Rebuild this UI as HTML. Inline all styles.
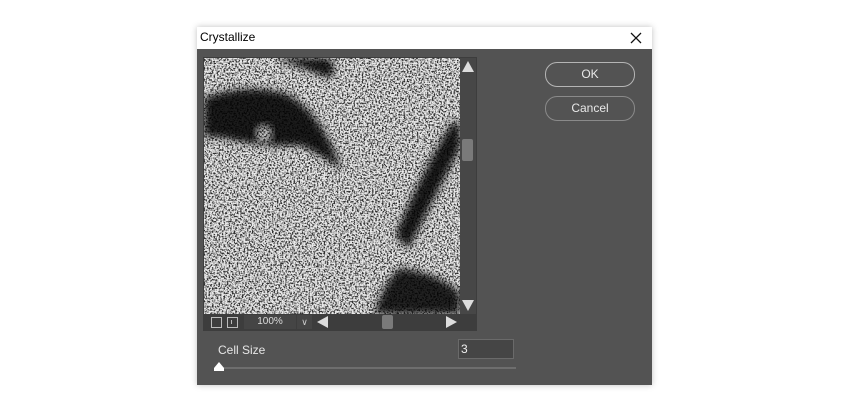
<!DOCTYPE html>
<html><head><style>
body{margin:0;width:850px;height:412px;background:#fff;position:relative;overflow:hidden;font-family:"Liberation Sans",sans-serif;}
.dlg{position:absolute;left:197px;top:27px;width:455px;height:358px;background:#535353;box-shadow:0 0 6px rgba(0,0,0,.25);}
.tb{position:absolute;left:0;top:0;width:455px;height:22px;background:#fff;}
.tb span{position:absolute;left:3px;top:3px;font-size:12px;color:#000;}
.btn{position:absolute;left:348px;width:88px;height:23px;border:1px solid #b5b5b5;border-radius:12px;color:#e8e8e8;font-size:12px;text-align:center;line-height:23px;}
.abs{position:absolute;}
</style></head><body>
<div class="dlg">
<div class="tb"><span>Crystallize</span>
<svg class="abs" style="left:433px;top:5px" width="12" height="12"><path d="M1 1L11 11M11 1L1 11" stroke="#111" stroke-width="1.3"/></svg></div>
<div class="abs" style="left:6px;top:30px;width:274px;height:274px;background:#3d3d3d;"></div>
<svg class="abs" style="left:7px;top:31px" width="256" height="256">
<filter id="n" x="0" y="0" width="100%" height="100%"><feTurbulence type="fractalNoise" baseFrequency="0.6" numOctaves="2" seed="3"/><feColorMatrix type="matrix" values="0 0 0 0 0  0 0 0 0 0  0 0 0 0 0  3 0 0 0 -1.1"/><feComponentTransfer><feFuncA type="discrete" tableValues="0 0.1 0.3 0.55 0.8"/></feComponentTransfer></filter>
<filter id="b" x="-20%" y="-20%" width="140%" height="140%"><feGaussianBlur stdDeviation="4"/></filter>
<rect width="256" height="256" fill="#eaeaea"/>
<g filter="url(#b)" fill="#1a1a1a">
<path d="M0 40 Q40 25 80 35 Q115 50 138 112 Q110 92 95 87 Q60 90 20 80 L0 78Z"/>
<path d="M75 0 L125 0 Q135 15 125 20 Q100 10 75 2Z"/>
<path d="M248 64 L256 66 L256 90 Q230 140 205 190 Q195 185 192 175 Q220 110 248 64Z"/>
<path d="M195 210 Q235 215 256 235 L256 256 L170 256 Q178 228 195 210Z" fill="#222"/>
</g>
<ellipse cx="60" cy="76" rx="8" ry="9" fill="#d8d8d8" filter="url(#b)"/>
<rect width="256" height="256" fill="#000" filter="url(#n)"/>
</svg>
<div class="abs" style="left:263px;top:31px;width:16px;height:256px;background:#474747;"></div>
<div class="abs" style="left:265px;top:34px;width:0;height:0;border:6px solid transparent;border-bottom:11px solid #ddd;border-top:0;"></div>
<div class="abs" style="left:265px;top:273px;width:0;height:0;border:6px solid transparent;border-top:11px solid #ddd;border-bottom:0;"></div>
<div class="abs" style="left:265px;top:112px;width:11px;height:22px;background:#7a7a7a;border-radius:2px;"></div>
<div class="abs" style="left:14px;top:290px;width:9px;height:9px;border:1px solid #bbb;"></div>
<div class="abs" style="left:30px;top:290px;width:9px;height:9px;border:1px solid #bbb;"></div>
<div class="abs" style="left:34px;top:293px;width:1px;height:4px;background:#bbb;"></div>
<div class="abs" style="left:47px;top:288px;width:52px;height:14px;background:#454545;color:#ddd;font-size:10px;line-height:14px;text-align:center;">100%</div>
<div class="abs" style="left:100px;top:288px;width:15px;height:14px;background:#454545;color:#ccc;font-size:9px;text-align:center;line-height:14px;">&#8744;</div>
<div class="abs" style="left:120px;top:289px;width:0;height:0;border:6px solid transparent;border-right:11px solid #ddd;border-left:0;"></div>
<div class="abs" style="left:249px;top:289px;width:0;height:0;border:6px solid transparent;border-left:11px solid #ddd;border-right:0;"></div>
<div class="abs" style="left:185px;top:288px;width:11px;height:14px;background:#7a7a7a;border-radius:2px;"></div>
<div class="btn" style="top:35px;">OK</div>
<div class="btn" style="top:69px;border-color:#8a8a8a;">Cancel</div>
<div class="abs" style="left:21px;top:316px;color:#e6e6e6;font-size:12px;">Cell Size</div>
<div class="abs" style="left:261px;top:312px;background:#454545;border:1px solid #6a6a6a;color:#eee;font-size:12px;line-height:18px;padding-left:2px;box-sizing:border-box;width:56px;height:20px;">3</div>
<div class="abs" style="left:20px;top:340px;width:299px;height:2px;background:#6e6e6e;"></div>
<div class="abs" style="left:17px;top:335px;width:0;height:0;border:5px solid transparent;border-bottom:6px solid #fff;border-top:0;"></div>
<div class="abs" style="left:17px;top:341px;width:10px;height:3px;background:#fff;"></div>
</div>
</body></html>
